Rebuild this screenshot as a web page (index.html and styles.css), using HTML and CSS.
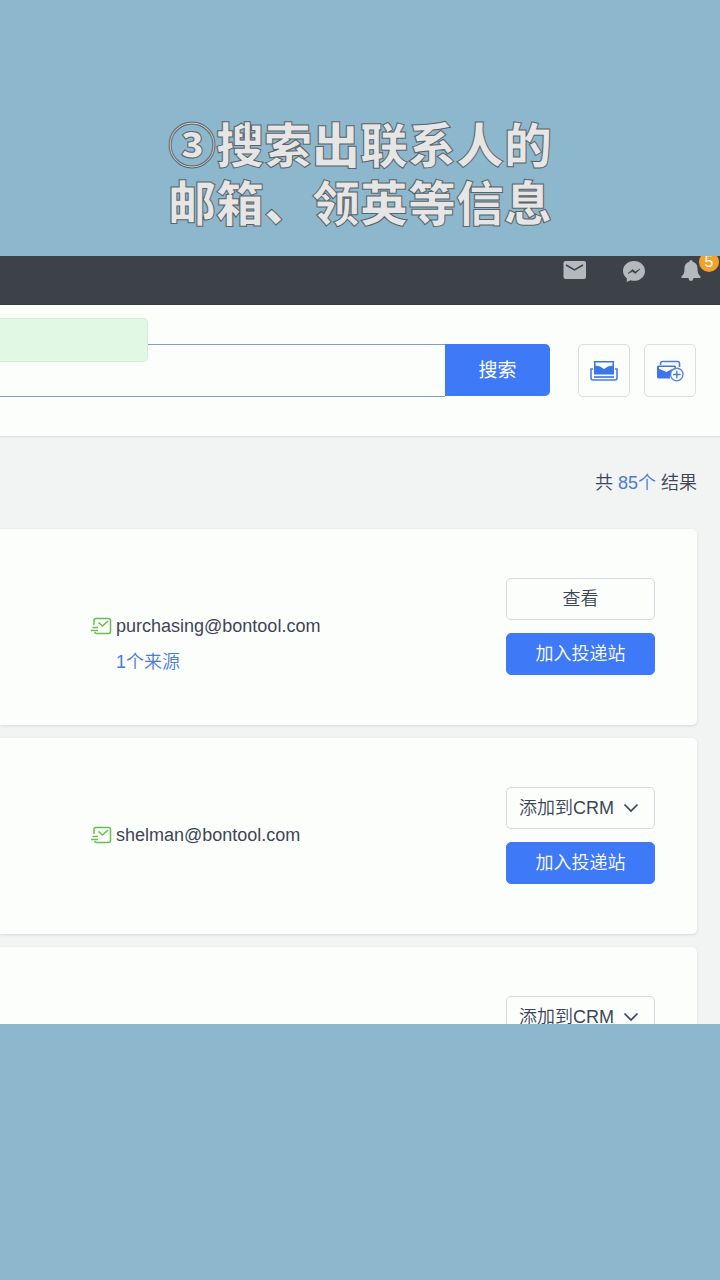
FILE: index.html
```html
<!DOCTYPE html>
<html lang="zh-CN">
<head>
<meta charset="utf-8">
<meta name="viewport" content="width=device-width, initial-scale=1">
<title>搜索联系人</title>
<link rel="stylesheet" href="styles.css">
</head>
<body>
<svg class="defs" aria-hidden="true">
  <symbol id="verified" viewBox="0 0 22 20">
    <path d="M4 9V4.500Q4 2.500 6 2.500H18.500Q20.500 2.500 20.500 4.500V15.500Q20.500 17.500 18.500 17.500H6.500Q5 17.500 4.500 16M8.500 6.500L12.500 10L18 5M2.500 11.500H8M1 14.500H8" fill="none" stroke="currentColor" stroke-width="1.500"/>
  </symbol>
  <symbol id="chevron" viewBox="0 0 16 10">
    <path d="M1.500 1.500L8 8L14.500 1.500" fill="none" stroke="currentColor" stroke-width="1.700"/>
  </symbol>
</svg>
<header class="caption">
  <h1 class="caption-text">
    <span class="caption-line">③搜索出联系人的</span>
    <span class="caption-line">邮箱、领英等信息</span>
  </h1>
</header>
<main class="screen">
  <nav class="topbar">
    <button class="top-icon" aria-label="邮件">
      <svg width="24" height="20" viewBox="0 0 24 20"><rect x="0.500" y="1" width="22.500" height="18" rx="2" fill="currentColor"/><path d="M3 5L11.500 10L20 5" fill="none" stroke="#3d4249" stroke-width="1.500"/></svg>
    </button>
    <button class="top-icon" aria-label="消息">
      <svg width="24" height="22" viewBox="0 0 24 22"><path d="M12 1C5.500 1 1 5.500 1 11C1 14 2.500 16.500 4.800 18.300V22L8.500 20.300C15.500 22.500 23 18 23 11C23 5.500 18.500 1 12 1Z" fill="currentColor"/><path d="M6 13.500L10.500 9.500L13.300 11.700L18 9L13.400 13.500L10.400 11.500Z" fill="#3d4249" stroke="#3d4249" stroke-width="0.600"/></svg>
    </button>
    <button class="top-icon" aria-label="通知">
      <svg width="20" height="22" viewBox="0 0 20 22"><path d="M10 0Q11.500 0 11.700 1.700C15 2.500 16.500 5 16.500 8.500C16.500 13 17.500 14.500 19.500 16.500V18H0.500V16.500C2.500 14.500 3.500 13 3.500 8.500C3.500 5 5 2.500 8.300 1.700Q8.500 0 10 0ZM7.500 18H12.500Q12 21 10 21Q8 21 7.500 18Z" fill="currentColor"/></svg>
      <span class="badge">5</span>
    </button>
  </nav>
  <section class="searchbar">
    <div class="toast" role="status"></div>
    <form class="search">
      <input class="search-input" type="text" aria-label="搜索关键词">
      <button class="search-button" type="button">搜索</button>
    </form>
    <button class="tool" aria-label="投递站">
      <svg width="28" height="22" viewBox="0 0 28 22"><path d="M4 1H24V14.500H4Z" fill="#3d74e8"/><path d="M5.500 2.500H22.500V5.500L18 6.500L14 9L10 6.500L5.500 5.500Z" fill="#fcfefc"/><path d="M3 9H1V18Q1 20 3 20H25Q27 20 27 18V9H25" fill="none" stroke="#4b7de0" stroke-width="1.600"/><path d="M4 17H24" stroke="#3d74e8" stroke-width="1.600"/></svg>
    </button>
    <button class="tool" aria-label="添加邮件">
      <svg width="28" height="22" viewBox="0 0 28 22"><path d="M4.500 5V3.500Q4.500 1.500 6.500 1.500H21.500Q23.500 1.500 23.500 3.500V7" fill="none" stroke="#4b7de0" stroke-width="1.600"/><path d="M2.500 5.500H18.500Q20 5.500 20 7V8Q13 9.500 14 18.500H2.500Q1 18.500 1 17V7Q1 5.500 2.500 5.500Z" fill="#3d74e8"/><path d="M3 7H18.500V8.500L15 9.500L10.500 12L3 8.800Z" fill="#fcfefc"/><circle cx="20.800" cy="14.500" r="6.200" fill="#fcfefc" stroke="#5f87d8" stroke-width="1.400"/><path d="M17 14.500H24.600M20.800 10.700V18.300" stroke="#4b7de0" stroke-width="1.400"/></svg>
    </button>
  </section>
  <section class="results">
    <p class="count">共 <span class="accent">85个</span> 结果</p>
    <article class="card">
      <div class="contact">
        <p class="email"><svg class="mark" aria-hidden="true"><use href="#verified"/></svg>purchasing@bontool.com</p>
        <a class="source" href="#">1个来源</a>
      </div>
      <div class="actions">
        <button class="action">查看</button>
        <button class="action primary">加入投递站</button>
      </div>
    </article>
    <article class="card">
      <div class="contact">
        <p class="email"><svg class="mark" aria-hidden="true"><use href="#verified"/></svg>shelman@bontool.com</p>
      </div>
      <div class="actions">
        <div class="picker">
          <select class="action" aria-label="添加到CRM"><option>添加到CRM</option></select>
          <svg class="arrow" aria-hidden="true"><use href="#chevron"/></svg>
        </div>
        <button class="action primary">加入投递站</button>
      </div>
    </article>
    <article class="card">
      <div class="contact"></div>
      <div class="actions">
        <div class="picker">
          <select class="action" aria-label="添加到CRM"><option>添加到CRM</option></select>
          <svg class="arrow" aria-hidden="true"><use href="#chevron"/></svg>
        </div>
      </div>
    </article>
  </section>
</main>
</body>
</html>
```

FILE: styles.css
```css
* {
  box-sizing: border-box;
}

body {
  margin: 0;
  height: 100vh;
  display: grid;
  grid-template-rows: 1fr 3fr 1fr;
  background: #8cb7cc;
  color: #3c4557;
  font-family: "Liberation Sans", "Noto Sans CJK SC", sans-serif;
  font-size: 18px;
  font-weight: 350;
}

button,
input,
select {
  font: inherit;
  color: inherit;
  margin: 0;
  padding: 0;
}

p {
  margin: 0;
}

svg {
  display: block;
}

.defs {
  position: absolute;
  width: 0;
  height: 0;
}

.caption {
  display: flex;
  justify-content: center;
  align-items: flex-end;
  padding-bottom: 27px;
}

.caption-text {
  margin: 0;
  font-family: "Noto Sans CJK SC", sans-serif;
  font-size: 48px;
  font-weight: 900;
  line-height: 58px;
  color: #e6e6e6;
  -webkit-text-stroke: 1px #5c6468;
}

.caption-line {
  display: block;
}

.screen {
  min-height: 0;
  overflow: hidden;
  background: #f2f4f4;
}

.topbar {
  display: flex;
  justify-content: flex-end;
  align-items: flex-start;
  gap: 35px;
  height: 49px;
  padding: 4px 19px 0 0;
  background: #3d4249;
  border-bottom: 1px solid #2b3035;
}

.top-icon {
  position: relative;
  border: 0;
  background: none;
  color: #b3babb;
}

.badge {
  position: absolute;
  top: -8px;
  left: 18px;
  width: 20px;
  height: 20px;
  border-radius: 50%;
  background: #f2a12b;
  color: #fff;
  font-size: 16px;
  line-height: 20px;
}

.searchbar {
  position: relative;
  display: flex;
  align-items: flex-start;
  gap: 14px;
  height: 131px;
  padding: 39px 24px 0 0;
  background: #fcfefc;
  box-shadow: 0 1px 2px #d8dcdc;
}

.toast {
  position: absolute;
  top: 13px;
  left: 0;
  width: 148px;
  height: 44px;
  border: 1px solid #d5ecd8;
  border-left: 0;
  border-radius: 0 5px 5px 0;
  background: #e1f8e4;
}

.search {
  display: flex;
  flex: 1;
  margin-right: 14px;
}

.search-input {
  flex: 1;
  min-width: 0;
  height: 53px;
  border: 1px solid #829ccb;
  border-width: 1px 0;
  background: #fcfefc;
}

.search-button {
  width: 105px;
  height: 52px;
  padding-bottom: 4px;
  border: 0;
  border-radius: 0 5px 5px 0;
  background: #3e79f7;
  color: #fff;
  font-size: 19px;
  font-weight: 400;
}

.tool {
  display: grid;
  place-items: center;
  width: 52px;
  height: 53px;
  border: 1px solid #d9dfe2;
  border-radius: 5px;
  background: #fcfefc;
}

.results {
  display: flex;
  flex-direction: column;
  gap: 13px;
  padding: 34px 23px 0 0;
}

.count {
  margin-bottom: 19px;
  text-align: right;
  line-height: 27px;
}

.accent,
.source {
  color: #4a7bd9;
}

.card {
  display: flex;
  align-items: flex-start;
  min-height: 196px;
  padding: 49px 42px 49px 90px;
  border-radius: 0 5px 5px 0;
  background: #fcfefc;
  box-shadow: 0 1px 3px #d6dada;
}

.contact {
  flex: 1;
  padding-top: 35px;
}

.email {
  display: flex;
  align-items: center;
  gap: 4px;
  line-height: 26px;
}

.mark {
  width: 22px;
  height: 20px;
  color: #67bd4f;
}

.source {
  display: block;
  margin: 9px 0 0 26px;
  line-height: 28px;
  text-decoration: none;
}

.actions {
  display: flex;
  flex-direction: column;
  gap: 13px;
  width: 149px;
}

.action {
  display: block;
  width: 100%;
  height: 42px;
  padding-bottom: 4px;
  border: 1px solid #d5dae0;
  border-radius: 5px;
  background: #fcfefc;
}

.primary {
  border-color: #3e79f7;
  background: #3e79f7;
  color: #fff;
}

.picker {
  position: relative;
}

select.action {
  appearance: none;
  padding: 0 32px 0 12px;
}

.arrow {
  position: absolute;
  top: 16px;
  right: 16px;
  width: 16px;
  height: 10px;
  pointer-events: none;
}
```
